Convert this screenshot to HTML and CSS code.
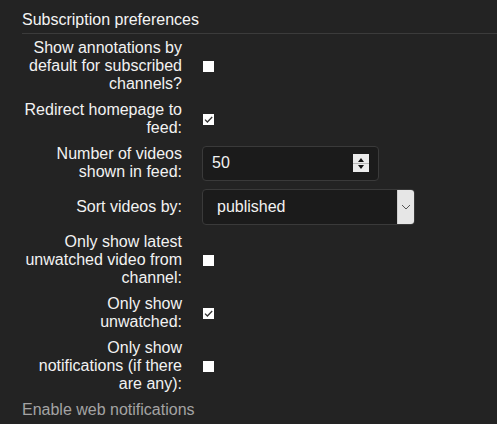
FILE: index.html
```html
<!DOCTYPE html>
<html>
<head>
<meta charset="utf-8">
<link rel="stylesheet" href="styles.css">
</head>
<body>
<div class="prefs">
  <div class="legend">Subscription preferences</div>

  <div class="group">
    <label class="lbl">Show annotations by default for subscribed channels?</label>
    <span class="check"></span>
  </div>

  <div class="group">
    <label class="lbl">Redirect homepage to feed:</label>
    <span class="check checked"><svg viewBox="0 0 11 11" width="11" height="11"><path d="M2 5.6 L4.4 8 L9.2 3" fill="none" stroke="#333" stroke-width="1.3"/></svg></span>
  </div>

  <div class="group">
    <label class="lbl">Number of videos shown in feed:</label>
    <div class="num">
      <span class="num-val">50</span>
      <span class="spin">
        <span class="spin-up"></span>
        <span class="spin-sep"></span>
        <span class="spin-down"></span>
      </span>
    </div>
  </div>

  <div class="group">
    <label class="lbl">Sort videos by:</label>
    <div class="sel">
      <span class="sel-val">published</span>
      <span class="sel-btn"><svg viewBox="0 0 10 6" width="10" height="6"><path d="M1 1 L5 5 L9 1" fill="none" stroke="#555" stroke-width="1"/></svg></span>
    </div>
  </div>

  <div class="group">
    <label class="lbl">Only show latest unwatched video from channel:</label>
    <span class="check"></span>
  </div>

  <div class="group">
    <label class="lbl">Only show unwatched:</label>
    <span class="check checked"><svg viewBox="0 0 11 11" width="11" height="11"><path d="M2 5.6 L4.4 8 L9.2 3" fill="none" stroke="#333" stroke-width="1.3"/></svg></span>
  </div>

  <div class="group">
    <label class="lbl">Only show notifications (if there are any):</label>
    <span class="check"></span>
  </div>

  <div class="link">Enable web notifications</div>
</div>
</body>
</html>
```

FILE: styles.css
```css
html, body {
  margin: 0;
  padding: 0;
  background: #232323;
  height: 100%;
  overflow: hidden;
}
body {
  font-family: "Liberation Sans", Arial, sans-serif;
  font-size: 16px;
  line-height: 18px;
  color: #f2f2f2;
}
.prefs {
  padding-left: 22px;
}
.legend {
  margin-top: 6px;
  padding: 5px 0 4px;
  border-bottom: 1px solid #3b3b3b;
  margin-bottom: 5px;
  color: #f4f4f4;
}
.group {
  display: flex;
  align-items: center;
  margin-bottom: 8px;
}
.lbl {
  width: 160px;
  text-align: right;
  margin-right: 20px;
  flex: none;
}
.check {
  width: 11px;
  height: 11px;
  background: #ffffff;
  margin-left: 1px;
  display: block;
  flex: none;
}
.check svg {
  display: block;
}
.num {
  box-sizing: border-box;
  width: 177px;
  height: 35px;
  border: 1px solid #3a3a3a;
  border-radius: 4px;
  background: #1b1b1b;
  display: flex;
  align-items: center;
  padding-left: 9px;
  padding-right: 9px;
}
.num-val {
  flex: 1;
  color: #f2f2f2;
}
.spin {
  width: 16px;
  height: 18px;
  background: #ececec;
  display: flex;
  flex-direction: column;
  align-items: center;
  justify-content: space-between;
  box-sizing: border-box;
  padding: 4px 0 3px;
}
.spin-up {
  width: 0;
  height: 0;
  border-left: 3.5px solid transparent;
  border-right: 3.5px solid transparent;
  border-bottom: 4px solid #111;
}
.spin-down {
  width: 0;
  height: 0;
  border-left: 3.5px solid transparent;
  border-right: 3.5px solid transparent;
  border-top: 4px solid #111;
}
.spin-sep {
  width: 16px;
  height: 1px;
  background: #b8b8b8;
}
.sel {
  box-sizing: border-box;
  width: 213px;
  height: 36px;
  border: 1px solid #3a3a3a;
  border-radius: 4px;
  background: #1b1b1b;
  display: flex;
  align-items: stretch;
  overflow: hidden;
}
.sel-val {
  flex: 1;
  padding-left: 14px;
  display: flex;
  align-items: center;
  color: #f2f2f2;
}
.sel-btn {
  width: 16px;
  background: #e6e6e6;
  display: flex;
  align-items: center;
  justify-content: center;
  border-left: 1px solid #cfcfcf;
}
.sel-btn svg {
  display: block;
}
.link {
  color: #a3a3a3;
  margin-top: 1px;
}
```
